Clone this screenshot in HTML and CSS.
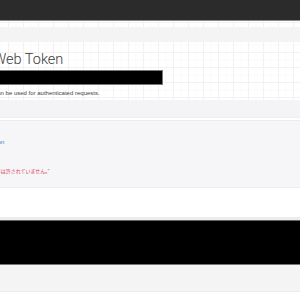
FILE: index.html
```html
<!DOCTYPE html>
<html lang="en">
<head>
  <meta charset="UTF-8" />
  <meta name="viewport" content="width=device-width, initial-scale=1.0"/>
  <title>JSON Web Token</title>
  <link rel="stylesheet" href="styles.css">
</head>
<body>
  <!-- Top bar -->
  <div class="topbar"></div>

  <!-- Token block on grid paper -->
  <div class="grid-area">
    <div class="subnav"></div>
    <div class="content">
      <h1 class="title">JSON Web Token</h1>
      <div class="token-box"></div>
      <p class="hint">This JWT token can be used for authenticated requests.</p>
    </div>
  </div>

  <div class="band"></div>

  <!-- Response panel -->
  <div class="panel">
    <div class="content">
      <a class="doc-link" href="#">Read the documentation</a>
      <p class="error">“この操作は許されていません。”</p>
    </div>
  </div>

  <div class="spacer"></div>

  <!-- Code output -->
  <div class="code-wrap">
    <div class="code"></div>
  </div>

  <div class="footer-band"></div>
</body>
</html>
```

FILE: styles.css
```css
body {
  margin: 0;
  font-family: 'Liberation Sans', Arial, sans-serif;
  background: #fff;
  color: #333;
  overflow: hidden;
}

.topbar {
  height: 20px;
  background: #2b2b2b;
  border-bottom: 1px solid #8a8a8a;
}

.grid-area {
  padding-top: 6px;
  height: 73px;
  background-color: #fff;
  background-image:
    linear-gradient(#f2f2f2 1px, transparent 1px),
    linear-gradient(90deg, #f2f2f2 1px, transparent 1px),
    linear-gradient(#fafafa 1px, transparent 1px),
    linear-gradient(90deg, #fafafa 1px, transparent 1px);
  background-size: 15px 15px, 15px 15px, 7.5px 7.5px, 7.5px 7.5px;
  background-position: 0 1px, 8px 0, 0 1px, 8px 0;
}

.subnav {
  height: 15px;
  background: #f4f4f4;
}

.content {
  margin-left: -52px;
}

.title {
  margin: 10px 0 0 5px;
  font-family: Roboto, 'Liberation Sans', sans-serif;
  font-size: 14.5px;
  font-weight: 300;
  line-height: 15px;
  color: #3a3a3a;
}

.token-box {
  width: 213px;
  height: 13px;
  margin-top: 3px;
  background: #000;
  border: 1px solid #777;
}

.hint {
  margin: 4px 0 0 3px;
  font-size: 6px;
  line-height: 8px;
  color: #444;
}

.band {
  height: 17px;
  background: #f4f4f6;
  border-bottom: 1px solid #eeeeef;
  margin-bottom: 2px;
}

.panel {
  height: 66px;
  background: #f6f6f8;
  border-top: 1px solid #ebebed;
  border-bottom: 1px solid #ececee;
}

.panel .content {
  padding-top: 17px;
}

.doc-link {
  display: block;
  margin-left: -9px;
  font-size: 6px;
  line-height: 8px;
  color: #4a78c8;
  text-decoration: none;
}

.error {
  margin: 21px 0 0 31px;
  font-family: 'Liberation Sans', 'Noto Sans CJK JP', sans-serif;
  font-size: 5px;
  line-height: 8px;
  color: #d9364f;
}

.spacer {
  height: 29px;
}

.code-wrap {
  border-top: 3px solid #ececec;
}

.code {
  height: 43px;
  background: #000;
  border-top: 1px solid #666;
  border-bottom: 1px solid #777;
}

.footer-band {
  height: 26px;
  background: #f4f4f4;
  border-bottom: 1px solid #ededed;
}
```
